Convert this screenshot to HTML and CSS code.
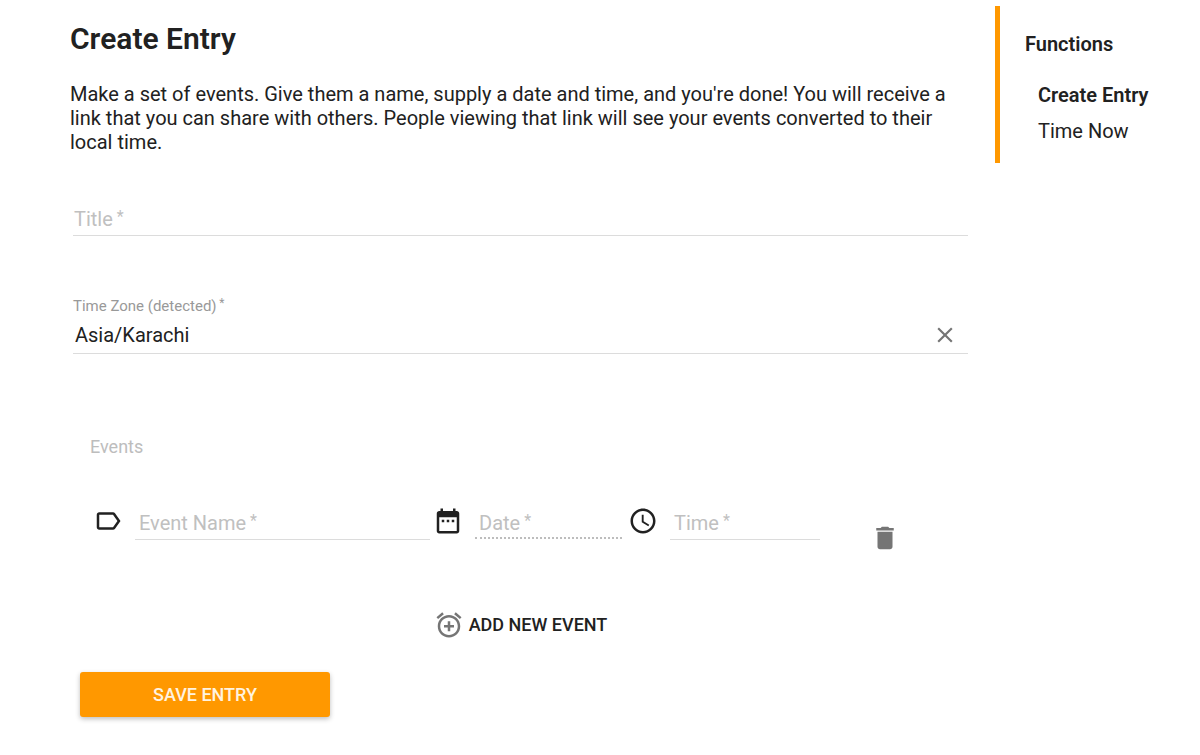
FILE: index.html
```html
<!DOCTYPE html>
<html lang="en">
<head>
<meta charset="utf-8">
<meta name="viewport" content="width=device-width, initial-scale=1">
<title>Create Entry</title>
<link rel="stylesheet" href="styles.css">
</head>
<body>
<div class="page">
  <main class="main">
    <h1 class="heading">Create Entry</h1>
    <p class="intro">Make a set of events. Give them a name, supply a date and time, and you're done! You will receive a link that you can share with others. People viewing that link will see your events converted to their local time.</p>
    <form class="form">
      <div class="field title-field">
        <label class="label" for="title">Title <span class="star">*</span></label>
        <input class="input" id="title" type="text">
      </div>
      <div class="zone">
        <label class="zone-label" for="zone">Time Zone (detected) <span class="star">*</span></label>
        <div class="zone-box">
          <input class="zone-input" id="zone" type="text" value="Asia/Karachi">
          <button class="icon-button" type="button" aria-label="Clear time zone">
            <svg class="clear-icon" viewBox="0 0 24 24"><path d="M19 6.41L17.59 5 12 10.59 6.41 5 5 6.41 10.59 12 5 17.59 6.41 19 12 13.41 17.59 19 19 17.59 13.41 12z"/></svg>
          </button>
        </div>
      </div>
      <section class="events">
        <h2 class="subhead">Events</h2>
        <div class="event">
          <div class="event-part event-name">
            <svg class="icon" viewBox="0 0 24 24"><path d="M17.63 5.84C17.27 5.33 16.67 5 16 5L5 5.01C3.9 5.01 3 5.9 3 7v10c0 1.1.9 1.99 2 1.99L16 19c.67 0 1.27-.33 1.63-.84L22 12l-4.37-6.16zM16 17H5V7h11l3.55 5L16 17z"/></svg>
            <div class="field">
              <label class="label" for="event-name">Event Name <span class="star">*</span></label>
              <input class="input" id="event-name" type="text">
            </div>
          </div>
          <div class="event-part event-short">
            <svg class="icon" viewBox="0 0 24 24"><path d="M9 11H7v2h2v-2zm4 0h-2v2h2v-2zm4 0h-2v2h2v-2zm2-7h-1V2h-2v2H8V2H6v2H5c-1.110 0-1.990.9-1.990 2L3 20c0 1.100.89 2 2 2h14c1.100 0 2-.9 2-2V6c0-1.100-.9-2-2-2zm0 16H5V9h14v11z"/></svg>
            <div class="field event-date">
              <label class="label" for="event-date">Date <span class="star">*</span></label>
              <input class="input input-dotted" id="event-date" type="text">
            </div>
          </div>
          <div class="event-part event-short">
            <svg class="icon" viewBox="0 0 24 24"><path d="M11.990 2C6.470 2 2 6.480 2 12s4.470 10 9.990 10C17.520 22 22 17.520 22 12S17.520 2 11.990 2zM12 20c-4.420 0-8-3.580-8-8s3.580-8 8-8 8 3.580 8 8-3.580 8-8 8zm.5-13H11v6l5.250 3.150.75-1.230-4.500-2.670V7z"/></svg>
            <div class="field">
              <label class="label" for="event-time">Time <span class="star">*</span></label>
              <input class="input" id="event-time" type="text">
            </div>
          </div>
          <button class="icon-button delete" type="button" aria-label="Delete event">
            <svg class="icon icon-muted" viewBox="0 0 24 24"><path d="M6 19c0 1.100.9 2 2 2h8c1.100 0 2-.9 2-2V7H6v12zM19 4h-3.500l-1-1h-5l-1 1H5v2h14V4z"/></svg>
          </button>
        </div>
      </section>
      <button class="add" type="button">
        <svg class="icon icon-muted" viewBox="0 0 24 24"><path d="M7.880 3.390L6.600 1.860 2 5.710l1.290 1.530 4.590-3.850zM22 5.720l-4.600-3.860-1.290 1.530 4.600 3.860L22 5.720zM12 4c-4.970 0-9 4.030-9 9s4.020 9 9 9c4.970 0 9-4.030 9-9s-4.030-9-9-9zm0 16c-3.870 0-7-3.130-7-7s3.130-7 7-7 7 3.130 7 7-3.130 7-7 7zm1-11h-2v3H8v2h3v3h2v-3h3v-2h-3V9z"/></svg>
        ADD NEW EVENT
      </button>
      <button class="save" type="submit">SAVE ENTRY</button>
    </form>
  </main>
  <nav class="side" aria-labelledby="side-title">
    <h2 class="side-title" id="side-title">Functions</h2>
    <ul class="side-list">
      <li><a class="side-link side-link-active" href="#create">Create Entry</a></li>
      <li><a class="side-link" href="#now">Time Now</a></li>
    </ul>
  </nav>
</div>
</body>
</html>
```
FILE: styles.css
```css
* {
  box-sizing: border-box;
}

body {
  margin: 0;
  background: #fff;
  color: #212121;
  font: 20px/24px Roboto, "Liberation Sans", sans-serif;
}

button,
input {
  font: inherit;
  color: inherit;
  background: none;
  border: 0;
  padding: 0;
  min-width: 0;
}

button {
  cursor: pointer;
}

.page {
  display: grid;
  grid-template-columns: minmax(0, 1fr) 205px;
  align-items: start;
}

.main {
  padding: 21px 27px 32px 70px;
}

.heading {
  margin: 0;
  font-size: 30px;
  line-height: 36px;
  font-weight: 600;
}

.intro {
  margin: 25px 20px 0 0;
}

.form {
  display: flex;
  flex-direction: column;
  padding-top: 48px;
}

.title-field,
.zone {
  margin-left: 3px;
}

.field {
  display: grid;
  flex: 1;
  min-width: 0;
}

.label,
.input {
  grid-area: 1 / 1;
}

.label {
  padding: 5px 4px 0;
  color: #c0c0c0;
  pointer-events: none;
}

.title-field .label {
  padding-left: 1px;
}

.star {
  font-size: 16px;
  line-height: 1;
  vertical-align: 4px;
  margin-left: -1px;
}

.input {
  width: 100%;
  height: 34px;
  padding: 0 4px;
  border-bottom: 1px solid #dcdcdc;
}

.input-dotted {
  height: 33px;
  border-bottom: 2px dotted #bdbdbd;
}

.zone {
  margin-top: 60px;
}

.zone-label {
  display: block;
  font-size: 15px;
  line-height: 20px;
  color: #999;
}

.zone-label .star {
  font-size: 12px;
}

.zone-box {
  display: flex;
  align-items: center;
  height: 38px;
  padding: 0 10px 0 2px;
  border-bottom: 1px solid #dcdcdc;
}

.zone-input {
  flex: 1;
}

.icon-button {
  display: flex;
}

.clear-icon {
  width: 26px;
  height: 26px;
  fill: #757575;
}

.events {
  padding: 81px 0 0 20px;
}

.subhead {
  margin: 0;
  font-size: 18px;
  line-height: 24px;
  font-weight: 400;
  color: #bdbdbd;
}

.event {
  display: flex;
  gap: 3px;
  padding: 47px 68px 0 3px;
}

.event-part {
  display: flex;
  gap: 12px;
}

.event-name {
  flex: 337 1 0;
}

.event-short {
  flex: 192 1 0;
}

.event-date {
  margin-right: 3px;
}

.event-part {
  min-width: 0;
}

.icon {
  flex: none;
  width: 30px;
  height: 30px;
  fill: #212121;
}

.icon-muted {
  fill: #757575;
}

.delete {
  margin: 17px 0 0 47px;
}

.add {
  display: flex;
  align-items: center;
  align-self: center;
  gap: 5px;
  margin: 57px 0 0 3px;
  font-size: 18px;
  font-weight: 500;
}

.save {
  width: 250px;
  height: 45px;
  margin: 32px 0 0 10px;
  border-radius: 3px;
  background: #ff9800;
  box-shadow: 0 2px 5px rgba(0, 0, 0, 0.26);
  color: #fff3e0;
  font-size: 18px;
  font-weight: 500;
}

.side {
  margin-top: 6px;
  padding: 26px 20px 14px 25px;
  border-left: 5px solid #ff9800;
}

.side-title {
  margin: 0;
  font-size: 20px;
  line-height: 24px;
  font-weight: 600;
}

.side-list {
  margin: 21px 0 0;
  padding: 0 0 0 13px;
  list-style: none;
}

.side-link {
  display: block;
  line-height: 36px;
  margin-top: -6px;
  padding-top: 6px;
  color: inherit;
  text-decoration: none;
}

.side-link-active {
  font-weight: 600;
}
```
